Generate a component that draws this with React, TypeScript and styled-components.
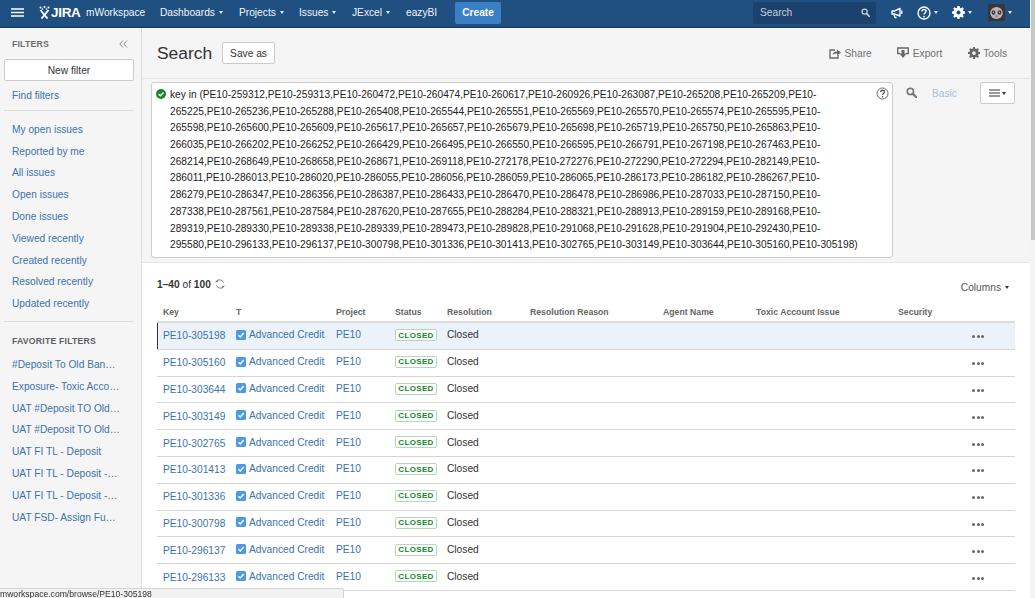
import React from "react";
import styled, { createGlobalStyle } from "styled-components";

const Global = createGlobalStyle`
  html, body { margin: 0; padding: 0; height: 598px; overflow: hidden; background: #fff; }
  body { font-family: "Liberation Sans", Arial, sans-serif; font-size: 10.2px; color: #333; }
  #root { height: 598px; }
  * { box-sizing: border-box; }
`;

const Frame = styled.div`display: flex; width: 1035px; height: 598px; overflow: hidden;`;
const Page = styled.div`width: 1030px; height: 598px; display: flex; flex-direction: column; flex: none;`;
const ScrollTrack = styled.div`flex: 1; background: #f4f4f4; display: flex; flex-direction: column;`;
const ScrollThumb = styled.div`height: 240px; background: #c8c8c8; margin-left: 1px;`;

const Header = styled.header`
  height: 28px; flex: none; background: #205081; border-bottom: 1px solid #1a3f66;
  box-shadow: inset 0 -1px 0 #1c4671; display: flex; align-items: center; color: #fff; padding-bottom: 2px;
`;
const Burger = styled.span`display: flex; margin-left: 11px; width: 13px;`;
const Logo = styled.span`display: flex; align-items: center; margin-left: 15px; gap: 1px; width: 47px;`;
const LogoText = styled.span`font-weight: 700; font-size: 13.5px; letter-spacing: -0.3px;`;
const NavItem = styled.span<{ $w: number }>`
  width: ${p => p.$w}px; flex: none; font-size: 10.2px; display: flex; align-items: center; gap: 4px; white-space: nowrap; color: #f1f5f9;
`;
const Caret = styled.i<{ $c?: string }>`
  display: inline-block; width: 0; height: 0; border-left: 2.6px solid transparent; border-right: 2.6px solid transparent;
  border-top: 3px solid ${p => p.$c || "#dfe8f1"};
`;
const CreateBtn = styled.span`
  width: 46px; height: 22px; background: #3b7fc4; border-radius: 2px; color: #fff; font-weight: 700; font-size: 10.2px;
  display: flex; align-items: center; justify-content: center; margin-left: 18px;
`;
const TopSearch = styled.div`
  width: 123px; height: 22px; background: #1a426c; border-radius: 2px; margin-left: 252px; display: flex; align-items: center;
  justify-content: space-between; padding: 0 6px 0 7px; color: #c3d1df; font-size: 10.2px;
`;
const TopIcons = styled.div`display: flex; align-items: center; margin-left: 15px;`;
const TopIcon = styled.span<{ $w: number }>`display: flex; align-items: center; gap: 3px; width: ${p => p.$w}px; flex: none;`;

const Body = styled.div`flex: 1; display: flex; min-height: 0;`;
const Sidebar = styled.aside`width: 142px; flex: none; background: #f5f5f5; border-right: 1px solid #dcdcdc; padding: 0 7px 0 4px;`;
const SideHead = styled.div`display: flex; justify-content: space-between; align-items: center; padding: 0 6px 0 8px; height: 31px;`;
const SideTitle = styled.div`font-size: 8.7px; font-weight: 700; color: #6d6d6d; letter-spacing: 0.2px;`;
const NewFilter = styled.div`
  height: 22px; background: #fff; border: 1px solid #ccc; border-radius: 2px; display: flex; align-items: center; justify-content: center;
  color: #333; font-size: 10.2px; width: 130px;
`;
const SideLink = styled.div`height: 21.8px; line-height: 21.8px; padding-left: 8px; color: #3b73af; white-space: nowrap; font-size: 10.2px;`;
const SideRule = styled.div`height: 1px; background: #dcdcdc; width: 130px;`;
const SideGroup = styled.div<{ $t: number; $b: number }>`padding: ${p => p.$t}px 0 ${p => p.$b}px;`;
const FavTitle = styled(SideTitle)`padding: 14px 0 8px 8px; color: #5f5f5f;`;

const Main = styled.main`flex: 1; display: flex; flex-direction: column; min-width: 0; background: #fff;`;
const SearchBar = styled.div`height: 51px; flex: none; background: #f5f5f5; border-bottom: 1px solid #e4e4e4; display: flex; align-items: center; padding: 0 23px 0 15px;`;
const Title = styled.h1`margin: 0; font-weight: 400; font-size: 17.4px; color: #333; width: 65px;`;
const SaveAs = styled.span`height: 22px; width: 53px; background: #fff; border: 1px solid #ccc; border-radius: 2px; display: flex; align-items: center; justify-content: center; font-size: 10.2px; color: #333;`;
const Tools = styled.div`margin-left: auto; display: flex; align-items: center; gap: 25.5px;`;
const ToolItem = styled.span`display: flex; align-items: center; gap: 3.5px; color: #707070; font-size: 10.2px;`;

const QueryRow = styled.div`height: 184px; flex: none; background: #f5f5f5; border-bottom: 1px solid #e6e6e6; display: flex; align-items: flex-start; padding: 3px 15px 0 9px;`;
const QueryBox = styled.div`position: relative; width: 742px; height: 176px; background: #fff; border: 1px solid #ccc; border-radius: 3px; padding: 4px 0 0 18px;`;
const QueryLine = styled.div`height: 16.7px; line-height: 16.7px; color: #222; font-size: 10.18px; white-space: nowrap;`;
const Ok = styled.span`position: absolute; left: 4px; top: 6px; display: flex;`;
const QHelp = styled.span`position: absolute; right: 3px; top: 4px; display: flex;`;
const QuerySide = styled.div`display: flex; flex: 1; align-items: center; padding-left: 13px;`;
const MagnifyBox = styled.span`display: flex; margin-top: -2px;`;
const BasicLink = styled.span`color: #a4bfdc; margin-left: 15px; font-size: 10.2px;`;
const MenuBtn = styled.span`
  margin-left: auto; width: 35px; height: 22px; background: #fff; border: 1px solid #ccc; border-radius: 2px;
  display: flex; align-items: center; justify-content: center; gap: 2px;
`;

const Results = styled.section`flex: 1; min-height: 0; overflow: hidden; padding: 0 15px;`;
const ResultsHead = styled.div`height: 42px; display: flex; align-items: center;`;
const Count = styled.span`color: #333; font-size: 10.2px; b { font-weight: 700; }`;
const Refresh = styled.span`display: flex; margin-left: 4px;`;
const Columns = styled.span`margin-left: auto; margin-right: 6px; margin-top: 6px; display: flex; align-items: center; gap: 4px; color: #555; font-size: 10.2px;`;

const gridCols = "73px 100px 59px 52px 83px 133px 93px 142px 73px 50px";
const HeadRow = styled.div`display: grid; grid-template-columns: ${gridCols}; height: 19px; border-bottom: 2px solid #dcdcdc; margin-top: -1px; padding-top: 3px;`;
const HeadCell = styled.div`padding-left: 6px; font-size: 8.7px; font-weight: 700; color: #666; white-space: nowrap;`;
const Row = styled.div<{ $on?: boolean }>`
  display: grid; grid-template-columns: ${gridCols}; height: 26.8px; align-items: center; border-bottom: 1px solid #d6d6d6;
  background: ${p => (p.$on ? "#ebf2fa" : "#fff")}; box-shadow: ${p => (p.$on ? "inset 1px 0 0 #333" : "none")};
`;
const Cell = styled.div`padding-left: 6px; white-space: nowrap; font-size: 10.2px; color: #333; margin-top: -2px;`;
const LinkCell = styled(Cell)`color: #3b73af;`;
const KeyCell = styled(LinkCell)`margin-top: 0;`;
const TypeCell = styled(LinkCell)`display: flex; align-items: center; gap: 3px;`;
const Lozenge = styled.span`
  display: inline-flex; align-items: center; justify-content: center; width: 42px; height: 12px; border: 1px solid #b2d8b9; border-radius: 2px;
  color: #14892c; font-size: 8px; font-weight: 700; letter-spacing: 0.35px; background: #fff;
`;
const Dots = styled.div`padding-left: 7px; display: flex; gap: 1.5px; justify-content: flex-start; margin-top: 2px;`;
const Dot = styled.i`width: 3px; height: 3px; border-radius: 50%; background: #666; display: block;`;

const StatusTip = styled.div`
  position: fixed; left: 0; bottom: 0; width: 344px; height: 10px; background: #f2f2f2; border: 1px solid #d4d4d4; border-left: 0; border-bottom: 0;
  border-top-right-radius: 3px; font-size: 8.6px; line-height: 10px; color: #333; white-space: nowrap; overflow: hidden;
`;

const Search = ({ c, s = 11 }: { c: string; s?: number }) => (
  <svg width={s} height={s} viewBox="0 0 12 12"><circle cx="4.8" cy="4.8" r="3.4" fill="none" stroke={c} strokeWidth="1.7" /><path d="M7.4 7.4 11 11" stroke={c} strokeWidth="2.2" strokeLinecap="round" /></svg>
);
const Gear = ({ c, s = 14 }: { c: string; s?: number }) => (
  <svg width={s} height={s} viewBox="0 0 16 16">
    <path fill={c} fillRule="evenodd" d="M6.7 0h2.6l.4 2.2 1.3.5L12.9 1.5l1.6 1.6-1.2 1.9.5 1.3 2.2.4v2.6l-2.2.4-.5 1.3 1.2 1.9-1.6 1.6-1.9-1.2-1.3.5-.4 2.2H6.7l-.4-2.2-1.3-.5-1.9 1.2-1.6-1.6 1.2-1.9-.5-1.3L0 9.3V6.7l2.2-.4.5-1.3-1.2-1.9 1.6-1.6L5 2.7l1.3-.5zM8 5.5a2.5 2.5 0 1 0 0 5 2.5 2.5 0 0 0 0-5z" />
  </svg>
);
const Help = ({ c, s = 14, w = 1.5 }: { c: string; s?: number; w?: number }) => (
  <svg width={s} height={s} viewBox="0 0 16 16">
    <circle cx="8" cy="8" r="6.8" fill="none" stroke={c} strokeWidth={w} />
    <path d="M5.6 6.2C5.7 4.8 6.7 4 8 4c1.4 0 2.4.9 2.4 2.1 0 1.8-2.4 1.9-2.4 3.6" fill="none" stroke={c} strokeWidth="1.6" />
    <circle cx="8" cy="12" r="1" fill={c} />
  </svg>
);
const Check = () => (
  <svg width="10" height="10" viewBox="0 0 10 10"><rect width="10" height="10" rx="1.5" fill="#4a9ae8" /><path d="M2.4 5.2 4.3 7 7.7 3" fill="none" stroke="#fff" strokeWidth="1.5" /></svg>
);

const queryLines = [
  "key in (PE10-259312,PE10-259313,PE10-260472,PE10-260474,PE10-260617,PE10-260926,PE10-263087,PE10-265208,PE10-265209,PE10-",
  "265225,PE10-265236,PE10-265288,PE10-265408,PE10-265544,PE10-265551,PE10-265569,PE10-265570,PE10-265574,PE10-265595,PE10-",
  "265598,PE10-265600,PE10-265609,PE10-265617,PE10-265657,PE10-265679,PE10-265698,PE10-265719,PE10-265750,PE10-265863,PE10-",
  "266035,PE10-266202,PE10-266252,PE10-266429,PE10-266495,PE10-266550,PE10-266595,PE10-266791,PE10-267198,PE10-267463,PE10-",
  "268214,PE10-268649,PE10-268658,PE10-268671,PE10-269118,PE10-272178,PE10-272276,PE10-272290,PE10-272294,PE10-282149,PE10-",
  "286011,PE10-286013,PE10-286020,PE10-286055,PE10-286056,PE10-286059,PE10-286065,PE10-286173,PE10-286182,PE10-286267,PE10-",
  "286279,PE10-286347,PE10-286356,PE10-286387,PE10-286433,PE10-286470,PE10-286478,PE10-286986,PE10-287033,PE10-287150,PE10-",
  "287338,PE10-287561,PE10-287584,PE10-287620,PE10-287655,PE10-288284,PE10-288321,PE10-288913,PE10-289159,PE10-289168,PE10-",
  "289319,PE10-289330,PE10-289338,PE10-289339,PE10-289473,PE10-289828,PE10-291068,PE10-291628,PE10-291904,PE10-292430,PE10-",
  "295580,PE10-296133,PE10-296137,PE10-300798,PE10-301336,PE10-301413,PE10-302765,PE10-303149,PE10-303644,PE10-305160,PE10-305198)",
];
const keys = ["305198", "305160", "303644", "303149", "302765", "301413", "301336", "300798", "296137", "296133"];
const quick = ["My open issues", "Reported by me", "All issues", "Open issues", "Done issues", "Viewed recently", "Created recently", "Resolved recently", "Updated recently"];
const favs = ["#Deposit To Old Ban…", "Exposure- Toxic Acco…", "UAT #Deposit TO Old…", "UAT #Deposit TO Old…", "UAT FI TL - Deposit", "UAT FI TL - Deposit -…", "UAT FI TL - Deposit -…", "UAT FSD- Assign Fu…"];
const heads = ["Key", "T", "Project", "Status", "Resolution", "Resolution Reason", "Agent Name", "Toxic Account Issue", "Security", ""];

export default function App() {
  return (
    <Frame>
      <Global />
      <Page>
        <Header>
          <Burger>
            <svg width="13" height="9" viewBox="0 0 13 9"><path d="M0 1h13M0 4.5h13M0 8h13" stroke="#fff" strokeWidth="1.4" /></svg>
          </Burger>
          <Logo>
            <svg width="11" height="13" viewBox="0 0 11 13">
              <path d="M1.5 4 5.5 9 9.5 4M5.5 9 2.5 12.5M5.5 9 8.5 12.5" stroke="#fff" strokeWidth="1.8" fill="none" />
              <circle cx="1.5" cy="1.5" r="1" fill="#fff" /><circle cx="5.5" cy="1" r="1" fill="#fff" /><circle cx="9.5" cy="1.5" r="1" fill="#fff" /><circle cx="3.5" cy="3" r=".8" fill="#fff" /><circle cx="7.5" cy="3" r=".8" fill="#fff" />
            </svg>
            <LogoText>JIRA</LogoText>
          </Logo>
          <NavItem $w={74}>mWorkspace</NavItem>
          <NavItem $w={79}>Dashboards <Caret /></NavItem>
          <NavItem $w={60}>Projects <Caret /></NavItem>
          <NavItem $w={53}>Issues <Caret /></NavItem>
          <NavItem $w={54}>JExcel <Caret /></NavItem>
          <NavItem $w={31}>eazyBI</NavItem>
          <CreateBtn>Create</CreateBtn>
          <TopSearch>Search<Search c="#c3d1df" s={9} /></TopSearch>
          <TopIcons>
            <TopIcon $w={26}>
              <svg width="12" height="12" viewBox="0 0 12 12">
                <path d="M1 4h2.500L9 1.500v7.500L3.500 7H1z" fill="none" stroke="#fff" strokeWidth="1.400" strokeLinejoin="round" />
                <path d="M3 7.500 4 10.500h1.500" fill="none" stroke="#fff" strokeWidth="1.300" />
                <path d="M10.800 3.500v3.500" stroke="#fff" strokeWidth="1.300" />
              </svg>
            </TopIcon>
            <TopIcon $w={35}><Help c="#fff" s={14} w={1.6} /><Caret /></TopIcon>
            <TopIcon $w={36}><Gear c="#fff" s={13} /><Caret /></TopIcon>
            <TopIcon $w={26}>
              <svg width="17" height="17" viewBox="0 0 17 17">
                <rect width="17" height="17" rx="2" fill="#3a3436" />
                <ellipse cx="8.500" cy="9" rx="6.300" ry="6" fill="#b9b5b5" />
                <ellipse cx="5.500" cy="8.500" rx="1.900" ry="2.200" fill="#3f383b" />
                <ellipse cx="11.500" cy="8.500" rx="1.900" ry="2.200" fill="#3f383b" />
                <circle cx="8.500" cy="12.300" r="1.200" fill="#9c7f84" />
                <circle cx="5.500" cy="8.200" r=".6" fill="#ddd" /><circle cx="11.500" cy="8.200" r=".6" fill="#ddd" />
              </svg>
              <Caret />
            </TopIcon>
          </TopIcons>
        </Header>
        <Body>
          <Sidebar>
            <SideHead>
              <SideTitle>FILTERS</SideTitle>
              <svg width="9" height="8" viewBox="0 0 9 8"><path d="M4 .5.8 4 4 7.500M8 .5 4.800 4 8 7.500" fill="none" stroke="#8c8c8c" strokeWidth="1" /></svg>
            </SideHead>
            <NewFilter>New filter</NewFilter>
            <SideGroup $t={4} $b={3}><SideLink>Find filters</SideLink></SideGroup>
            <SideRule />
            <SideGroup $t={8} $b={6}>{quick.map(q => <SideLink key={q}>{q}</SideLink>)}</SideGroup>
            <SideRule />
            <FavTitle>FAVORITE FILTERS</FavTitle>
            {favs.map((f, i) => <SideLink key={i}>{f}</SideLink>)}
          </Sidebar>
          <Main>
            <SearchBar>
              <Title>Search</Title>
              <SaveAs>Save as</SaveAs>
              <Tools>
                <ToolItem>
                  <svg width="12" height="11" viewBox="0 0 12 11"><path d="M6 2H1v8h8V7" fill="none" stroke="#666" strokeWidth="1.300" /><path d="M3.500 7C4 4.500 5.500 3.500 8 3.500V1.500L12 4.500 8 7.500V5.500C6 5.500 4.800 6 3.500 7z" fill="#666" /></svg>
                  Share
                </ToolItem>
                <ToolItem>
                  <svg width="12" height="12" viewBox="0 0 12 12"><path d="M3 6.500H.7V1h10.600v5.500H9" fill="none" stroke="#666" strokeWidth="1.300" /><path d="M4.500 3h3v3.500h2L6 11 2.500 6.500h2z" fill="#666" /></svg>
                  Export
                </ToolItem>
                <ToolItem><Gear c="#666" s={12} />Tools</ToolItem>
              </Tools>
            </SearchBar>
            <QueryRow>
              <QueryBox>
                <Ok>
                  <svg width="10" height="10" viewBox="0 0 10 10"><circle cx="5" cy="5" r="5" fill="#14892c" /><path d="M2.600 5.100 4.400 6.800 7.500 3.500" fill="none" stroke="#fff" strokeWidth="1.500" /></svg>
                </Ok>
                {queryLines.map((l, i) => <QueryLine key={i}>{l}</QueryLine>)}
                <QHelp><Help c="#555" s={13} w={1.100} /></QHelp>
              </QueryBox>
              <QuerySide>
                <MagnifyBox><Search c="#707070" s={11} /></MagnifyBox>
                <BasicLink>Basic</BasicLink>
                <MenuBtn>
                  <svg width="11" height="8" viewBox="0 0 11 8"><path d="M0 1h11M0 4h11M0 7h11" stroke="#333" strokeWidth="1.100" /></svg>
                  <Caret $c="#333" />
                </MenuBtn>
              </QuerySide>
            </QueryRow>
            <Results>
              <ResultsHead>
                <Count><b>1–40</b> of <b>100</b></Count>
                <Refresh>
                  <svg width="10" height="10" viewBox="0 0 10 10"><path d="M8.500 3.500A3.800 3.800 0 0 0 2 2.200M1.500 6.500A3.800 3.800 0 0 0 8 7.800" fill="none" stroke="#777" strokeWidth="1" /><path d="M2.800 .3V3.200H0z M7.200 9.700V6.800H10z" fill="#777" /></svg>
                </Refresh>
                <Columns>Columns <Caret $c="#333" /></Columns>
              </ResultsHead>
              <HeadRow>{heads.map((h, i) => <HeadCell key={i}>{h}</HeadCell>)}</HeadRow>
              {keys.map((k, i) => (
                <Row key={k} $on={i === 0}>
                  <KeyCell>PE10-{k}</KeyCell>
                  <TypeCell><Check />Advanced Credit</TypeCell>
                  <LinkCell>PE10</LinkCell>
                  <Cell><Lozenge>CLOSED</Lozenge></Cell>
                  <Cell>Closed</Cell>
                  <Cell /><Cell /><Cell /><Cell />
                  <Dots><Dot /><Dot /><Dot /></Dots>
                </Row>
              ))}
            </Results>
          </Main>
        </Body>
      </Page>
      <ScrollTrack><ScrollThumb /></ScrollTrack>
      <StatusTip>mworkspace.com/browse/PE10-305198</StatusTip>
    </Frame>
  );
}
